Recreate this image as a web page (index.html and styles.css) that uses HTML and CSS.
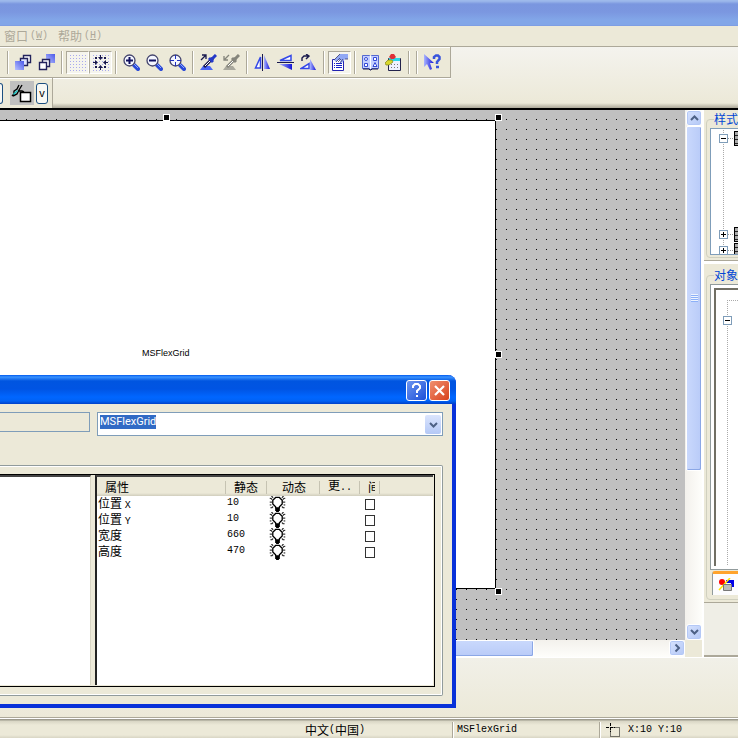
FILE: index.html
```html
<!DOCTYPE html>
<html lang="zh-CN">
<head>
<meta charset="utf-8">
<title>MSFlexGrid</title>
<link rel="stylesheet" href="styles.css">
</head>
<body>
<svg class="defs" aria-hidden="true">
  <defs>
    <linearGradient id="blue" x1="0" y1="1" x2="1" y2="0"><stop offset="0" stop-color="#b9c2ff"/><stop offset="1" stop-color="#4a58e8"/></linearGradient>
    <linearGradient id="side" x1="0" y1="0" x2="1" y2="0"><stop offset="0" stop-color="#a9b4ff"/><stop offset="1" stop-color="#1414d8"/></linearGradient>
    <pattern id="dots" width="3" height="3" patternUnits="userSpaceOnUse"><rect x="1" y="1" width="1" height="1" fill="#a9a9ee"/></pattern>
    <symbol id="lens" viewBox="0 0 17 17">
      <path d="M11 11L15 15" stroke="#2a49d8" stroke-width="4" stroke-linecap="round"/><path d="M11 10L15 14" stroke="#8ea9ff"/>
      <circle cx="6.500" cy="6.500" r="5.500" fill="#f4f6ff" stroke="#44446c" stroke-width="1.300"/>
    </symbol>
    <symbol id="bulb" viewBox="0 0 17 17">
      <path d="M6.500 13V11.500L3.500 8.500V4.500L6.500 1.500H10.500L13.500 4.500V8.500L10.500 11.500V13" fill="#fff" stroke="#000" stroke-width="1.400"/>
      <path d="M6 12H11V16H10V17H7V16H6Z"/>
      <path d="M0 2.500h2v1h1M0 6.500h3M0 9.500h2M1 12.500h2v-1h1M2.500 0v1h1v1M17 2.500h-2v1h-1M17 6.500h-3M17 9.500h-2M16 12.500h-2v-1h-1M14.500 0v1h-1v1" fill="none" stroke="#000"/>
    </symbol>
    <symbol id="down" viewBox="0 0 9 6"><path d="M1 1L4.500 4.500L8 1" fill="none" stroke="#4d6185" stroke-width="2"/></symbol>
    <symbol id="minus" viewBox="0 0 9 9"><path d="M2 4h5v1H2z"/></symbol>
    <symbol id="plus" viewBox="0 0 9 9"><path d="M2 4h5v1H2zM4 2h1v5H4z"/></symbol>
  </defs>
</svg>

<div class="app">
  <header class="titlebar"></header>
  <nav class="menubar">
    <button class="menu">窗口<span class="latin">(<u>W</u>)</span></button>
    <button class="menu">帮助<span class="latin">(<u>H</u>)</span></button>
  </nav>

  <div class="rebar">
    <div class="toolbar">
      <i class="sep"></i>
      <button class="tool" aria-label="置于底层"><svg viewBox="0 0 17 17"><path d="M8.500 1.500h7v7h-7z" fill="#fff" stroke="#22225c" stroke-width="1.400"/><path d="M5.500 4.500h7v7h-7z" fill="#dfe3ff" stroke="#22225c" stroke-width="1.400"/><path d="M0 7h9v9H0z" fill="url(#blue)"/></svg></button>
      <button class="tool" aria-label="置于顶层"><svg viewBox="0 0 17 17"><path d="M8 0h9v9H8z" fill="url(#blue)"/><path d="M4.500 5.500h7v7h-7z" fill="#fff" stroke="#22225c" stroke-width="1.400"/><path d="M1.500 8.500h7v7h-7z" fill="#fff" stroke="#22225c" stroke-width="1.400"/></svg></button>
      <i class="sep"></i>
      <button class="tool pressed" aria-label="网格"><svg viewBox="0 0 17 17"><path d="M0 0h17v17H0z" fill="url(#dots)"/></svg></button>
      <button class="tool pressed" aria-label="对齐网格"><svg viewBox="0 0 17 17"><path d="M0 0h17v17H0z" fill="url(#dots)"/><path d="M8 1h1v2h2L8.500 6L6 3h2zM8 16h1v-2h2L8.500 11L6 14h2zM1 8v1h2v2l3-2.500L3 6v2zM16 8v1h-2v2l-3-2.500L14 6v2zM3 3h2v2H3zM12 3h2v2h-2zM3 12h2v2H3zM12 12h2v2h-2z" fill="#18184c"/></svg></button>
      <i class="sep"></i>
      <button class="tool" aria-label="放大"><svg viewBox="0 0 17 17"><use href="#lens"/><path d="M3 5.500h7v2H3zM5.500 3h2v7h-2z" fill="#101060"/></svg></button>
      <button class="tool" aria-label="缩小"><svg viewBox="0 0 17 17"><use href="#lens"/><path d="M3 5.500h7v2H3z" fill="#101060"/></svg></button>
      <button class="tool" aria-label="缩放区域"><svg viewBox="0 0 17 17"><use href="#lens"/><path d="M6 1h1v4H6zM6 8h1v4H6zM1 6h4v1H1zM8 6h4v1H8z" fill="#2030c0"/></svg></button>
      <i class="sep"></i>
      <button class="tool" aria-label="拾取颜色"><svg viewBox="0 0 17 17"><path d="M1 6L6 1M2 1h4v4" fill="none" stroke="#18184c" stroke-width="1.300"/><path d="M0 16l3-4h7l3 4z" fill="#4c66f4"/><path d="M4 13L13 4" stroke="#18184c" stroke-width="3"/><path d="M5 12l6-6" stroke="#fff"/><path d="M9 4l4 4M12 5l4-4" stroke="#2438c8" stroke-width="3"/></svg></button>
      <button class="tool" aria-label="应用颜色" disabled><svg viewBox="0 0 17 17"><path d="M6 1L1 6M1 2v4h4" fill="none" stroke="#85857c" stroke-width="1.300"/><path d="M0 16l3-4h7l3 4z" fill="#aaa99e"/><path d="M4 13L13 4" stroke="#85857c" stroke-width="3"/><path d="M5 12l6-6" stroke="#fff"/><path d="M9 4l4 4M12 5l4-4" stroke="#85857c" stroke-width="3"/></svg></button>
      <i class="sep"></i>
      <button class="tool" aria-label="水平翻转"><svg viewBox="0 0 17 17"><path d="M6.500 3v11h-5z" fill="#fff" stroke="#3448e8" stroke-width="1.500"/><path d="M10 1v14h6z" fill="url(#side)"/><path d="M8 0h1v17H8z" fill="#18184c"/></svg></button>
      <button class="tool" aria-label="垂直翻转"><svg viewBox="0 0 17 17"><path d="M14 1.500v5H3z" fill="#fff" stroke="#3448e8" stroke-width="1.500"/><path d="M2 10h13v6z" fill="url(#side)"/><path d="M0 8h17v1H0z" fill="#18184c"/></svg></button>
      <button class="tool" aria-label="旋转"><svg viewBox="0 0 17 17"><path d="M2 7V4l2-2h4M6 0l3 2-3 3" fill="none" stroke="#18184c" stroke-width="1.400"/><path d="M9 9.500v5H1z" fill="#fff" stroke="#3448e8" stroke-width="1.500"/><path d="M10 5v11h6z" fill="url(#side)"/></svg></button>
      <i class="sep"></i>
      <button class="tool pressed" aria-label="属性"><svg viewBox="0 0 17 17"><path d="M1.500 5.500h11v11h-11z" fill="#fff" stroke="#2222b0"/><path d="M3 9.500h1M3 11.500h1M3 13.500h1M5 9.500h6M5 11.500h6M5 13.500h6" stroke="#1420c8"/><path d="M9 0h8v5h-3l-3 4-2-1 1-2H7L5 8 3 6l3-3z" fill="#91a8f4"/><path d="M3 6l6-6M5 8l4-4M7 8l3-3M9 9l3-4M14 5h3" fill="none" stroke="#3a3a70" stroke-width=".8"/></svg></button>
      <i class="sep"></i>
      <button class="tool" aria-label="对象库"><svg viewBox="0 0 17 17"><path d="M.5 1.500h7l1 1 1-1h7v13h-7l-1 1-1-1h-7z" fill="#c4d0ff" stroke="#5468d0"/><path d="M8.500 2v13" stroke="#fff"/><path d="M1 15h6l1 1h1l1-1h6" stroke="#18184c" fill="none"/><path d="M2.500 9.500h3v3h-3zM11 12.500l2-4 2 4zM11.500 3.500h3v3h-3z" fill="#fff" stroke="#3448d8"/><circle cx="4" cy="5" r="1.500" fill="#fff" stroke="#3448d8"/></svg></button>
      <button class="tool" aria-label="控件"><svg viewBox="0 0 17 17"><path d="M3.500 4.500h12v12h-12z" fill="#f0f2ff" stroke="#22224c"/><path d="M4 4h11v3H4z" fill="#2bd6e8"/><path d="M6 10.500h1M9 10.500h1M12 10.500h1M6 13.500h1M9 13.500h1M12 13.500h1" stroke="#777"/><path d="M4 3l2-3h3l2 3-2 2H6z" fill="#df3038"/><path d="M0 9l3-3h4l1 2-4 3H1z" fill="#d8d82c" stroke="#7e7e18" stroke-width=".7"/></svg></button>
      <i class="sep"></i>
      <i class="sep"></i>
      <button class="tool" aria-label="帮助"><svg viewBox="0 0 17 17"><path d="M0 0v13l3-3 3 6 2-1-2-6h4z" fill="url(#side)"/><path d="M10 5V3l2-1.500h2L15.500 3v2L13 8v2M12 13h3" fill="none" stroke="#3854dc" stroke-width="2.500"/></svg></button>
    </div>
    <div class="toolbar second">
      <button class="drop cut" aria-label="更多"></button>
      <button class="pen" aria-label="填充"><svg viewBox="0 0 23 23"><path d="M10.500 10.500h10v9h-10z" fill="#fff" stroke="#000" stroke-width="1.500"/><path d="M2 14l2-2V9l3-2 2-4M3 14l4-2 2-4 3-5M8 9h4l2 1" fill="none" stroke="#000" stroke-width="1.400"/><path d="M3 12l4-4 1 1-4 4z" fill="#16c8c8"/></svg></button>
      <button class="drop">v</button>
    </div>
  </div>

  <main class="workspace">
    <section class="editor">
      <div class="canvas">
        <div class="sheet"></div>
        <span class="object">MSFlexGrid</span>
        <i class="handle top-mid"></i><i class="handle top-right"></i><i class="handle mid-right"></i><i class="handle bottom-right"></i>
      </div>
      <div class="vscroll">
        <button class="arrow up" aria-label="向上"><svg viewBox="0 0 9 6"><use href="#down"/></svg></button>
        <div class="vthumb"><i class="grip"></i></div>
        <div class="track"></div>
        <button class="arrow" aria-label="向下"><svg viewBox="0 0 9 6"><use href="#down"/></svg></button>
      </div>
      <div class="hscroll">
        <div class="hthumb"></div>
        <div class="track"></div>
        <button class="arrow right" aria-label="向右"><svg viewBox="0 0 9 6"><use href="#down"/></svg></button>
      </div>
    </section>
    <aside class="side">
      <section class="panel">
        <fieldset class="group">
          <legend>样式</legend>
          <ul class="tree">
            <li class="open"><button class="toggle" aria-label="折叠"><svg viewBox="0 0 9 9"><use href="#minus"/></svg></button><i class="branch"></i><i class="node"></i></li>
            <li><button class="toggle" aria-label="展开"><svg viewBox="0 0 9 9"><use href="#plus"/></svg></button><i class="branch"></i><i class="node"></i></li>
            <li><button class="toggle" aria-label="展开"><svg viewBox="0 0 9 9"><use href="#plus"/></svg></button><i class="branch"></i><i class="node"></i></li>
          </ul>
        </fieldset>
      </section>
      <section class="panel objects">
        <fieldset class="group">
          <legend>对象</legend>
          <div class="frame">
            <div class="well"><div class="stem"><button class="toggle" aria-label="折叠"><svg viewBox="0 0 9 9"><use href="#minus"/></svg></button></div></div>
          </div>
          <button class="tab" aria-label="对象"><svg viewBox="0 0 17 14"><path d="M8 2h8v7h-3V5H8z" fill="#0000e8"/><circle cx="4" cy="4" r="3" fill="#f00"/><path d="M1 12L12 0" stroke="#ffe600" stroke-width="1.500"/><path d="M5.500 6.500h8v6h-8z" fill="#bdbdbd" stroke="#777"/></svg></button>
        </fieldset>
      </section>
      <div class="rest"></div>
    </aside>
  </main>

  <div class="dock"></div>
  <footer class="status">
    <span class="cell lang">中文<span class="latin">(</span>中国<span class="latin">)</span></span>
    <span class="cell name latin">MSFlexGrid</span>
    <span class="cell pos latin"><svg viewBox="0 0 14 14"><path d="M0 4.500h9M4.500 0v9" stroke="#000" stroke-dasharray="3 1"/><path d="M4.500 4.500h9v9h-9z" fill="none" stroke="#000" stroke-dasharray="1 1"/></svg>X:10 Y:10</span>
  </footer>

  <div class="dialog" role="dialog" aria-label="属性">
    <div class="caption">
      <button class="cap" aria-label="帮助"><svg viewBox="0 0 19 19"><path d="M6 7V5l2-2h3l2 2v2l-3 3v2M9 15h2" fill="none" stroke="#fff" stroke-width="2"/></svg></button>
      <button class="cap close" aria-label="关闭"><svg viewBox="0 0 19 19"><path d="M5 5l9 9M14 5l-9 9" stroke="#fff" stroke-width="2.200"/></svg></button>
    </div>
    <div class="content">
      <div class="fields">
        <input class="kind" type="text" aria-label="类型" disabled>
        <div class="combo"><input type="text" aria-label="名称" value="MSFlexGrid"><button aria-label="选择"><svg viewBox="0 0 9 6"><use href="#down"/></svg></button></div>
      </div>
      <div class="box">
        <div class="split">
          <div class="pane left"></div>
          <div class="pane grid">
            <table>
              <colgroup><col class="c1"><col class="c2"><col class="c3"><col class="c4"><col class="c5"><col></colgroup>
              <thead><tr><th>属性</th><th>静态</th><th class="mid">动态</th><th>更<span class="latin">..</span></th><th><span class="clip">间</span></th><th class="last"></th></tr></thead>
              <tbody>
                <tr><td>位置 <span class="latin">X</span></td><td class="latin">10</td><td><svg class="bulb" viewBox="0 0 17 17"><use href="#bulb"/></svg></td><td></td><td><input type="checkbox" aria-label="位置 X"></td><td></td></tr>
                <tr><td>位置 <span class="latin">Y</span></td><td class="latin">10</td><td><svg class="bulb" viewBox="0 0 17 17"><use href="#bulb"/></svg></td><td></td><td><input type="checkbox" aria-label="位置 Y"></td><td></td></tr>
                <tr><td>宽度</td><td class="latin">660</td><td><svg class="bulb" viewBox="0 0 17 17"><use href="#bulb"/></svg></td><td></td><td><input type="checkbox" aria-label="宽度"></td><td></td></tr>
                <tr><td>高度</td><td class="latin">470</td><td><svg class="bulb" viewBox="0 0 17 17"><use href="#bulb"/></svg></td><td></td><td><input type="checkbox" aria-label="高度"></td><td></td></tr>
              </tbody>
            </table>
          </div>
        </div>
      </div>
    </div>
  </div>
</div>
</body>
</html>
```
FILE: styles.css
```css
* { box-sizing: border-box; }
body {
  margin: 0;
  font: 12px/16px "Noto Sans CJK SC", sans-serif;
  color: #000;
  background: #ece9d8;
}
button { margin: 0; padding: 0; border: 0; background: none; font: inherit; color: inherit; }
svg { display: block; }
.defs { position: absolute; width: 0; height: 0; }
.latin { font-family: "Liberation Mono", monospace; font-size: 10px; }

.app { position: relative; display: flex; flex-direction: column; min-height: 100vh; overflow: hidden; }

.titlebar {
  height: 26px;
  background: linear-gradient(#9db9eb 0, #9db9eb 1px, #7a96df 4px, #7b97e0 12px, #82a6e8 20px, #82a6e8 25px, #7a96df 26px);
}
.menubar { display: flex; gap: 10px; height: 20px; padding-left: 4px; color: #aca899; }
.menu { display: flex; align-items: center; gap: 2px; }

.rebar {
  height: 64px;
  border-top: 1px solid #aca899;
  border-bottom: 2px solid #000;
  background: linear-gradient(#f4f3ee, #ece9d8 56px, #aca899 61px);
}
.toolbar {
  display: flex;
  align-items: center;
  width: max-content;
  height: 31px;
  padding: 0 6px 0 4px;
  border: solid #aca899;
  border-width: 0 1px 1px 0;
  background: #ece9d8;
  box-shadow: inset 0 1px #fff, 0 1px #fff;
}
.sep { width: 8px; height: 23px; padding: 0 3px; }
.sep::before { content: ""; display: block; height: 100%; border-left: 1px solid #aca899; border-right: 1px solid #fff; }
.tool { display: grid; place-items: center; width: 23px; height: 23px; }
.tool svg { width: 17px; height: 17px; }
.pressed { background: #f5f4ed; border: 1px solid; border-color: #aca899 #fff #fff #aca899; }
.second { height: 30px; gap: 2px; padding: 0 4px 0 0; border-bottom: 0; box-shadow: inset 0 1px #fff; }
.pen { width: 24px; height: 24px; background: #c0c0c0; }
.pen svg { width: 23px; height: 23px; }
.drop { width: 12px; height: 21px; border: 1px solid #1c4f80; border-radius: 3px; background: #f8f8f4; font: 11px/16px "Liberation Sans", sans-serif; }
.cut { width: 3px; margin-right: 5px; border-left: 0; border-radius: 0 3px 3px 0; }

.workspace { flex: 1; display: flex; gap: 2px; background: #fff; border-bottom: 1px solid #fff; }
.editor { flex: 1; display: grid; grid-template: 1fr 17px / 1fr 17px; min-width: 0; background: #ece9d8; }
.canvas {
  position: relative;
  overflow: hidden;
  background:
    linear-gradient(90deg, #c0c0c0 9px, transparent 9px) -3px 0 / 10px 10px,
    linear-gradient(#c0c0c0 9px, #000 9px) 0 0 / 10px 10px;
}
.sheet { position: absolute; left: -174px; top: 10px; width: 670px; height: 469px; background: #fff; border: 1px solid #000; }
.object { position: absolute; left: 142px; top: 235px; font: 9px/16px "Liberation Sans", sans-serif; }
.handle { position: absolute; width: 7px; height: 7px; background: #000; border: 1px solid #fff; }
.top-mid { left: 163px; top: 4px; }
.top-right { left: 495px; top: 4px; }
.mid-right { left: 495px; top: 241px; }
.bottom-right { left: 495px; top: 478px; }

.vscroll { display: flex; flex-direction: column; padding-left: 1px; background: linear-gradient(90deg, #f3f1ec, #fefefb); }
.hscroll { display: flex; background: linear-gradient(#f3f1ec, #fefefb); }
.track { flex: 1; }
.arrow {
  display: grid;
  place-items: center;
  width: 16px;
  height: 16px;
  border: 1px solid #fff;
  border-radius: 3px;
  background: linear-gradient(135deg, #d6e2fe, #b4c8f6);
  box-shadow: inset 0 0 0 1px #b4c8f6;
}
.arrow svg { width: 9px; height: 6px; }
.up svg { transform: rotate(180deg); }
.right svg { transform: rotate(-90deg); }
.vthumb {
  display: grid;
  place-items: center;
  flex: 0 0 65%;
  border: 1px solid #fff;
  border-radius: 2px;
  background: linear-gradient(90deg, #c9d8fc, #b9cbf8);
  box-shadow: inset -1px -1px #8ba7e6;
}
.grip { width: 7px; height: 8px; background: repeating-linear-gradient(#eef4fe 0 1px, #8cb0f8 1px 2px); }
.hthumb { flex: 0 0 78%; border: 1px solid #fff; border-radius: 2px; background: linear-gradient(#c9d8fc, #b9cbf8); box-shadow: inset -1px -1px #8ba7e6; }

.side { display: flex; flex-direction: column; width: 34px; overflow: hidden; background: #ece9d8; }
.panel { padding: 1px 0 2px 2px; border-bottom: 1px solid #aca899; }
.objects { flex: 1; display: flex; padding-top: 6px; box-shadow: inset 0 3px #fff; }
.group { flex: none; width: 200px; min-width: 0; margin: 0; padding: 1px 3px 2px; border: 1px solid #d0d0bf; border-radius: 4px; }
.group legend { margin-left: 4px; padding: 0; color: #0046d5; white-space: nowrap; }
.tree { height: 127px; margin: 0; padding: 1px 0 0 8px; overflow: hidden; list-style: none; border: 1px solid #7f9db9; background: #fff; }
.tree li { display: flex; align-items: center; height: 16px; background: repeating-linear-gradient(#aaa 0 1px, transparent 1px 2px) 4px 0 / 1px 100% no-repeat; }
.tree .open { height: 96px; align-items: flex-start; padding-top: 4px; }
.toggle { width: 9px; height: 9px; flex: none; border: 1px solid #7f9db9; background: #fff; }
.toggle svg { width: 9px; height: 9px; margin: -1px; }
.branch { width: 6px; height: 1px; background: repeating-linear-gradient(90deg, #999 0 1px, transparent 1px 2px); }
.open .branch { margin-top: 4px; }
.node { width: 16px; height: 15px; border: 1px solid #000; background: repeating-linear-gradient(#aaa 0 3px, #222 3px 4px); }
.open .node { margin-top: -3px; }
.objects .group { display: flex; flex-direction: column; }
.frame { flex: 1; display: flex; padding: 3px; border: 1px solid #919b9c; background: #fff; }
.well { flex: 1; display: flex; padding: 10px 0 0 11px; border: 2px solid #716f64; border-right: 0; border-bottom: 0; }
.stem {
  flex: 1;
  padding-top: 16px;
  background:
    repeating-linear-gradient(#aaa 0 1px, transparent 1px 2px) 0 0 / 1px 100% no-repeat,
    repeating-linear-gradient(90deg, #aaa 0 1px, transparent 1px 2px) 0 0 / 100% 1px no-repeat;
}
.stem .toggle { display: block; margin-left: -4px; }
.tab { display: block; width: 60px; height: 24px; margin: 1px 0 2px 2px; padding: 3px 5px; border: 1px solid #919b9c; border-top: 3px solid #ffa32c; border-bottom: 0; border-radius: 3px 3px 0 0; background: #fcfcfe; }
.tab svg { width: 17px; height: 14px; }
.rest { height: 54px; border-bottom: 2px solid #aca899; background: #efeee6; }

.dock { height: 59px; background: linear-gradient(#f1f0e8, #ece9d8); }
.status {
  display: flex;
  align-items: center;
  height: 21px;
  border-top: 1px solid #aca899;
  background: linear-gradient(#fff 0 1px, #9c9a8c 1px 2px, #d8d5c4 3px, #ece9d8 7px, #ece9d8 17px, #d8d5c4 20px);
}
.cell { display: flex; align-items: center; height: 16px; margin-top: 3px; }
.lang { flex: 1; justify-content: flex-end; padding-right: 87px; }
.name { width: 147px; padding-left: 4px; border-left: 1px solid #aca899; box-shadow: inset 1px 0 #fff; }
.pos { width: 139px; gap: 8px; padding-left: 6px; border-left: 1px solid #aca899; box-shadow: inset 1px 0 #fff; }
.pos svg { width: 14px; height: 14px; }

.dialog {
  position: absolute;
  left: 0;
  top: 375px;
  width: 456px;
  background: #ece9d8;
  border: solid #0831d9;
  border-width: 0 4px 4px 0;
  border-radius: 0 8px 0 0;
}
.caption {
  display: flex;
  justify-content: flex-end;
  gap: 2px;
  height: 29px;
  margin-right: -4px;
  padding: 5px 6px 0;
  border-radius: 0 8px 0 0;
  background: linear-gradient(#0058ee, #3a93ff 2px, #0055e0 6px, #0054e3 14px, #0066ff 22px, #0062f5 26px, #0040c8 29px);
}
.cap { width: 21px; height: 21px; border: 1px solid #fff; border-radius: 3px; background: linear-gradient(135deg, #6c95f0, #1c4fd8); }
.close { background: linear-gradient(135deg, #f09070, #d8411c); }
.content { padding: 8px 9px 8px 0; }
.fields { display: flex; align-items: flex-start; gap: 7px; }
.kind { width: 90px; height: 20px; border: 1px solid #7f9db9; border-left: 0; background: #ece9d8; }
.combo { display: flex; justify-content: space-between; flex: 1; height: 24px; padding: 2px 1px 1px 2px; border: 1px solid #7f9db9; background: #fff; }
.combo input { width: 56px; height: 14px; padding: 0; border: 0; background: #316ac5; color: #fff; font: 11px/14px Roboto, sans-serif; }
.combo button { display: grid; place-items: center; width: 16px; border-radius: 2px; background: linear-gradient(#dbe5fd, #b4c8f6); }
.combo svg { width: 9px; height: 6px; }
.box { margin-top: 29px; padding: 8px 7px 8px 0; border: 1px solid #919b9c; border-left: 0; border-radius: 0 2px 2px 0; box-shadow: inset -1px -1px #fff, inset 0 1px #fff; }
.split { display: flex; gap: 4px; height: 213px; border: solid #000; border-width: 1px 1px 1px 0; padding-right: 1px; padding-bottom: 1px; }
.pane { border-top: 2px solid #444; background: #fff; }
.left { width: 91px; border-right: 1px solid #d8d5c4; }
.grid { flex: 1; min-width: 0; border-left: 2px solid #222; }
table { width: 100%; table-layout: fixed; border-collapse: collapse; }
.c1 { width: 129px; }
.c2 { width: 41px; }
.c3 { width: 53px; }
.c4 { width: 40px; }
.c5 { width: 20px; }
th {
  height: 19px;
  padding: 0 0 0 8px;
  font-weight: 400;
  text-align: left;
  white-space: nowrap;
  background:
    linear-gradient(#c6c3b2, #c6c3b2) 100% 4px / 1px 13px no-repeat,
    linear-gradient(#ece9d8 16px, #d0cdbc);
}
.mid { padding-left: 15px; }
.last { background: linear-gradient(#ece9d8 16px, #d0cdbc); }
.clip { display: block; width: 7px; overflow: hidden; }
tbody tr { height: 16px; }
td { padding: 0 0 0 1px; line-height: 13px; white-space: nowrap; vertical-align: top; }
td .latin { line-height: 10px; }
.bulb { width: 17px; height: 16px; margin-left: 1px; }
td input { appearance: none; display: block; width: 10px; height: 11px; margin: 3px 0 0 4px; border: 1px solid #333; background: #fff; }
```
